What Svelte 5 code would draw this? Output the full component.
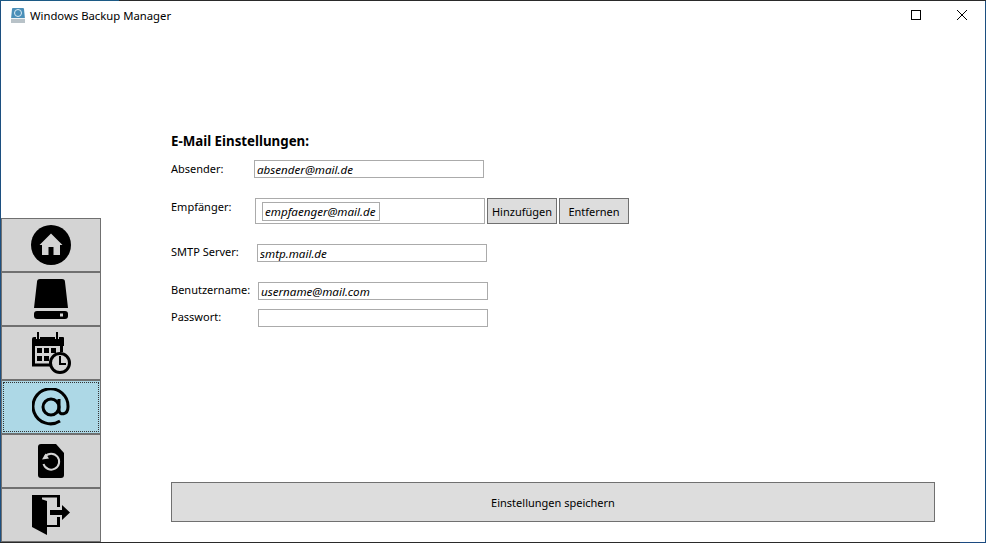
<script>
  const navItems = ['home', 'drive', 'schedule', 'mail', 'restore', 'exit']
  let active = $state('mail')
  let absender = $state('absender@mail.de')
  let smtp = $state('smtp.mail.de')
  let username = $state('username@mail.com')
  let passwort = $state('')
</script>

<div class="window">
  <header class="titlebar">
    <svg class="app-icon" width="16" height="16" viewBox="0 0 16 16">
      <path d="M3 0h10q1 0 1 1l1 10H1L2 1q0-1 1-1z" fill="#4a8fb8" />
      <path d="M1 10h14v5H1z" fill="#b8c2c8" />
      <path d="M1 10h14v1H1z" fill="#eef2f4" />
      <circle cx="8" cy="5" r="3.500" fill="none" stroke="#dcecf5" stroke-width="1" />
    </svg>
    <span class="title">Windows Backup Manager</span>
    <div class="controls">
      <svg width="10" height="10" viewBox="0 0 10 10" class="maximize">
        <rect x="0.500" y="0.500" width="9" height="9" fill="none" stroke="#000" />
      </svg>
      <svg width="10" height="10" viewBox="0 0 10 10">
        <path d="M0 0l10 10M10 0L0 10" stroke="#000" fill="none" />
      </svg>
    </div>
  </header>

  <div class="content">
    <nav>
      {#each navItems as item}
        <button class="nav-btn" class:active={active === item} onclick={() => (active = item)} aria-label={item}>
          {#if active === item}<span class="focus"></span>{/if}
          {#if item === 'home'}
            <svg width="40" height="40" viewBox="0 0 40 40">
              <circle cx="20" cy="20" r="20" fill="#000" />
              <path d="M20 8.500L8.500 20H11v10h6.500v-8h5v8H29V20h2.500z" fill="#d4d4d4" />
            </svg>
          {:else if item === 'drive'}
            <svg width="34" height="40" viewBox="0 0 34 40">
              <path d="M6 0h22q3 0 3 3l3 26H0L3 3q0-3 3-3z" fill="#000" />
              <rect x="0" y="32" width="34" height="8" rx="3" fill="#000" />
              <rect x="26" y="34.500" width="3" height="3" fill="#d4d4d4" />
            </svg>
          {:else if item === 'schedule'}
            <svg width="42" height="42" viewBox="0 0 42 42">
              <path d="M4 5h29q1 0 1 1v8H2V7q0-2 2-2z" fill="#000" />
              <path d="M8 0v7M27 0v7" stroke="#d4d4d4" stroke-width="4" />
              <path d="M8 0v7M27 0v7" stroke="#000" stroke-width="2" />
              <path d="M3.500 14v19H20M31.500 14v6" fill="none" stroke="#000" stroke-width="3" />
              <path d="M7 16h5v5H7zM14 16h5v5h-5zM21 16h5v5h-5zM7 24h5v5H7zM14 24h5v5h-5z" fill="#000" />
              <circle cx="30" cy="31" r="9.500" fill="#d4d4d4" stroke="#000" stroke-width="3" />
              <path d="M30 24v8h6" fill="none" stroke="#000" stroke-width="2" />
            </svg>
          {:else if item === 'mail'}
            <svg width="38" height="38" viewBox="0 0 38 38">
              <path d="M28 33A17.500 17.500 0 1 1 36 19c0 8-9 9-9 3V11" fill="none" stroke="#000" stroke-width="3" />
              <circle cx="19" cy="19" r="8" fill="none" stroke="#000" stroke-width="3" />
            </svg>
          {:else if item === 'restore'}
            <svg width="26" height="34" viewBox="0 0 26 34">
              <path d="M3 0h15l8 9v22q0 3-3 3H3q-3 0-3-3V3q0-3 3-3z" fill="#000" />
              <path d="M7 12.500A8 8 0 1 1 5.500 20" fill="none" stroke="#d4d4d4" stroke-width="2" />
              <path d="M4 15.500l7-1-3.500-5z" fill="#d4d4d4" />
            </svg>
          {:else}
            <svg width="38" height="40" viewBox="0 0 38 40">
              <path d="M0 0h28v12h-3V2.500H10V30h15v-8h3v10H10L0 32z" fill="#000" />
              <path d="M0 1l15 5v34L0 32z" fill="#000" />
              <path d="M18 15h12v-5l8 7.500-8 7.500v-5H18z" fill="#000" />
            </svg>
          {/if}
        </button>
      {/each}
    </nav>

    <main>
      <h1>E-Mail Einstellungen:</h1>

      <div class="row row-absender">
        <label for="absender">Absender:</label>
        <input id="absender" bind:value={absender} />
      </div>

      <div class="row row-empfaenger">
        <span class="label">Empfänger:</span>
        <div class="listbox">
          <span class="chip">empfaenger@mail.de</span>
        </div>
        <button class="small">Hinzufügen</button>
        <button class="small">Entfernen</button>
      </div>

      <div class="row row-smtp">
        <label for="smtp">SMTP Server:</label>
        <input id="smtp" bind:value={smtp} />
      </div>

      <div class="row row-user">
        <label for="username">Benutzername:</label>
        <input id="username" bind:value={username} />
      </div>

      <div class="row row-pass">
        <label for="passwort">Passwort:</label>
        <input id="passwort" type="password" bind:value={passwort} />
      </div>

      <button class="save">Einstellungen speichern</button>
    </main>
  </div>
</div>

<style>
  :global(body) {
    margin: 0;
    background: #fff;
  }

  .window {
    width: 986px;
    height: 543px;
    box-sizing: border-box;
    padding: 1px;
    background:
      linear-gradient(to right, #1c5a85 119px, #2a2a2a 119px) top / 100% 1px no-repeat,
      linear-gradient(to right, #2a2a2a 960px, #1c4a80 960px) bottom / 100% 1px no-repeat,
      #1c4f80;
    display: flex;
    flex-direction: column;
    font-family: "Noto Sans", "Open Sans", sans-serif;
    font-size: 11px;
    color: #000;
  }

  .titlebar {
    height: 30px;
    background: #fff;
    display: flex;
    align-items: center;
    padding-left: 9px;
    flex-shrink: 0;
  }

  .app-icon {
    margin-right: 4px;
    margin-top: -1px;
  }

  .title {
    font-size: 11.300px;
    margin-top: -1px;
  }

  .controls {
    margin-left: auto;
    display: flex;
    align-items: center;
    padding-right: 18px;
    margin-top: -2px;
  }

  .maximize {
    margin-right: 36px;
  }

  .content {
    flex: 1;
    background: #fff;
    display: flex;
    min-height: 0;
  }

  nav {
    width: 100px;
    flex-shrink: 0;
    display: flex;
    flex-direction: column;
    justify-content: flex-end;
  }

  .nav-btn {
    position: relative;
    height: 54px;
    width: 100px;
    padding: 0;
    box-sizing: border-box;
    border: 1px solid #707070;
    background: #d4d4d4;
    display: flex;
    align-items: center;
    justify-content: center;
  }

  .nav-btn.active {
    background: #add8e6;
  }

  .focus {
    position: absolute;
    inset: 1px;
    border: 1px dotted #333;
  }

  main {
    flex: 1;
    display: flex;
    flex-direction: column;
    padding: 101px 50px 20px 70px;
    min-width: 0;
  }

  h1 {
    margin: 0;
    font-size: 13.300px;
    font-weight: 700;
    line-height: 18px;
  }

  .row {
    display: flex;
    align-items: flex-start;
  }

  label, .label {
    line-height: 16px;
    flex-shrink: 0;
  }

  input {
    width: 230px;
    height: 18px;
    box-sizing: border-box;
    border: 1px solid #ababab;
    padding: 0 2px;
    margin: 0;
    font: italic 11.600px "Noto Sans", "Open Sans", sans-serif;
    color: #000;
    background: #fff;
    outline: none;
  }

  .row-absender { margin-top: 10px; }
  .row-absender label { width: 83px; padding-top: 1px; }
  .row-empfaenger { margin-top: 20px; }
  .row-empfaenger .label { width: 84px; padding-top: 1px; }
  .row-smtp { margin-top: 20px; }
  .row-smtp label { width: 86px; }
  .row-user { margin-top: 20px; }
  .row-user label { width: 87px; }
  .row-pass { margin-top: 9px; }
  .row-pass label { width: 87px; }

  .listbox {
    width: 230px;
    height: 26px;
    box-sizing: border-box;
    border: 1px solid #ababab;
    padding: 3px 6px;
    margin-right: 2px;
  }

  .chip {
    display: inline-block;
    height: 19px;
    line-height: 17px;
    width: 118px;
    box-sizing: border-box;
    border: 1px solid #ababab;
    padding: 0 2px;
    font-size: 11.600px;
    font-style: italic;
    white-space: nowrap;
  }

  button {
    font-family: inherit;
    font-size: 11px;
    color: #000;
  }

  .small {
    width: 70px;
    height: 26px;
    padding: 0;
    box-sizing: border-box;
    border: 1px solid #707070;
    background: #ddd;
    margin-right: 2px;
  }

  .save {
    margin-top: auto;
    width: 764px;
    height: 40px;
    flex-shrink: 0;
    box-sizing: border-box;
    border: 1px solid #707070;
    background: #ddd;
  }
</style>
